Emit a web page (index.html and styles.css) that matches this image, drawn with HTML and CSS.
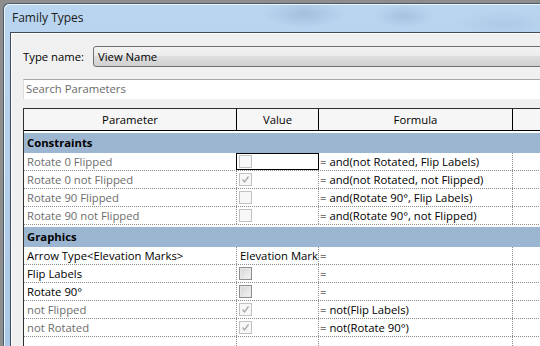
FILE: index.html
```html
<!DOCTYPE html>
<html lang="en">
<head>
  <meta charset="UTF-8" />
  <title>Family Types</title>
  <link rel="stylesheet" href="styles.css">
</head>
<body>
  <div class="window">
    <div class="titlebar">Family Types</div>
    <div class="frame">
      <div class="client">
        <div class="type-row">
          <span class="label">Type name:</span>
          <div class="combo">View Name</div>
        </div>
        <div class="search">Search Parameters</div>

        <div class="grid">
          <div class="row head">
            <div class="cell">Parameter</div>
            <div class="cell">Value</div>
            <div class="cell">Formula</div>
            <div class="cell"></div>
          </div>

          <div class="group">Constraints</div>
          <div class="row dim">
            <div class="cell">Rotate 0 Flipped</div>
            <div class="cell focus"><span class="box off"></span></div>
            <div class="cell formula">= and(not Rotated, Flip Labels)</div>
            <div class="cell"></div>
          </div>
          <div class="row dim">
            <div class="cell">Rotate 0 not Flipped</div>
            <div class="cell"><span class="box off"><svg viewBox="0 0 11 11"><path d="M2.5 5.5 L4.5 8 L8.5 2.5" /></svg></span></div>
            <div class="cell formula">= and(not Rotated, not Flipped)</div>
            <div class="cell"></div>
          </div>
          <div class="row dim">
            <div class="cell">Rotate 90 Flipped</div>
            <div class="cell"><span class="box off"></span></div>
            <div class="cell formula">= and(Rotate 90°, Flip Labels)</div>
            <div class="cell"></div>
          </div>
          <div class="row dim">
            <div class="cell">Rotate 90 not Flipped</div>
            <div class="cell"><span class="box off"></span></div>
            <div class="cell formula">= and(Rotate 90°, not Flipped)</div>
            <div class="cell"></div>
          </div>

          <div class="group">Graphics</div>
          <div class="row">
            <div class="cell">Arrow Type&lt;Elevation Marks&gt;</div>
            <div class="cell">Elevation Mark</div>
            <div class="cell formula">=</div>
            <div class="cell"></div>
          </div>
          <div class="row">
            <div class="cell">Flip Labels</div>
            <div class="cell"><span class="box"></span></div>
            <div class="cell formula">=</div>
            <div class="cell"></div>
          </div>
          <div class="row">
            <div class="cell">Rotate 90°</div>
            <div class="cell"><span class="box"></span></div>
            <div class="cell formula">=</div>
            <div class="cell"></div>
          </div>
          <div class="row dim">
            <div class="cell">not Flipped</div>
            <div class="cell"><span class="box off"><svg viewBox="0 0 11 11"><path d="M2.5 5.5 L4.5 8 L8.5 2.5" /></svg></span></div>
            <div class="cell formula">= not(Flip Labels)</div>
            <div class="cell"></div>
          </div>
          <div class="row dim">
            <div class="cell">not Rotated</div>
            <div class="cell"><span class="box off"><svg viewBox="0 0 11 11"><path d="M2.5 5.5 L4.5 8 L8.5 2.5" /></svg></span></div>
            <div class="cell formula">= not(Rotate 90°)</div>
            <div class="cell"></div>
          </div>
          <div class="row">
            <div class="cell"></div>
            <div class="cell"></div>
            <div class="cell"></div>
            <div class="cell"></div>
          </div>
        </div>
      </div>
    </div>
  </div>
</body>
</html>
```

FILE: styles.css
```css
* {
  box-sizing: border-box;
}
body {
  margin: 0;
  width: 540px;
  height: 346px;
  overflow: hidden;
  background: #8d8d8d;
  font-family: 'Open Sans', sans-serif;
  font-size: 11.3px;
  color: #000;
}
.window {
  margin: 3px 0 0 3px;
  height: 343px;
  display: flex;
  flex-direction: column;
  border-top: 1px solid #4b5b6c;
  border-left: 1px solid #4b5b6c;
  border-radius: 6px 0 0 0;
  background:
    radial-gradient(ellipse 40px 14px at 300px 10px, rgba(120,150,185,.35), transparent),
    radial-gradient(ellipse 30px 12px at 400px 12px, rgba(120,150,185,.3), transparent),
    radial-gradient(ellipse 50px 14px at 500px 20px, rgba(140,170,200,.25), transparent),
    linear-gradient(180deg, #bad5ef 0%, #aac9e8 100%);
  box-shadow: inset 1px 1px 0 rgba(255,255,255,.75);
}
.titlebar {
  height: 28px;
  line-height: 27px;
  padding-left: 8px;
  font-size: 12px;
  color: #1b1b1b;
}
.frame {
  flex: 1;
  display: flex;
  padding-left: 6px;
  min-height: 0;
}
.client {
  flex: 1;
  min-width: 0;
  overflow: hidden;
  background: #f0f0f0;
  border-top: 1px solid #3e4a58;
  border-left: 1px solid #3e4a58;
  box-shadow: inset 1px 1px 0 #fff;
  padding: 13px 0 0 12px;
}
.type-row {
  display: flex;
  align-items: center;
  height: 21px;
}
.label {
  width: 70px;
}
.combo {
  flex: 1;
  height: 21px;
  line-height: 19px;
  margin-right: -10px;
  padding-left: 4px;
  border: 1px solid #707070;
  border-radius: 3px;
  background: linear-gradient(180deg, #f3f3f3 0%, #ebebeb 45%, #dddddd 50%, #d0d0d0 100%);
}
.search {
  margin-top: 12px;
  margin-right: -10px;
  height: 20px;
  line-height: 18px;
  padding-left: 2px;
  background: #fff;
  border-top: 1px solid #a5a7ad;
  border-left: 1px solid #dcdde3;
  color: #6a6a6a;
}
.grid {
  margin-top: 9px;
  width: 540px;
  background: #fff;
  border-top: 1px solid #2e2e2e;
  border-left: 1px solid #2e2e2e;
}
.row {
  display: grid;
  grid-template-columns: 213px 82px 194px 1fr;
  height: 18px;
  border-bottom: 1px dotted #8a8a8a;
}
.cell {
  display: flex;
  align-items: center;
  padding-left: 3px;
  white-space: nowrap;
  overflow: hidden;
  border-right: 1px dotted #8a8a8a;
}
.cell.formula {
  padding-left: 1px;
  color: #000;
}
.row.dim .cell {
  color: #6d6d6d;
}
.row.dim .cell.formula {
  color: #000;
}
.head {
  height: 22px;
  background: #f6f6f6;
  border-bottom: 1px solid #000;
}
.head .cell {
  justify-content: center;
  padding-left: 0;
  border-right: 1px solid #000;
}
.group {
  margin-top: 2px;
  height: 20px;
  line-height: 20px;
  padding-left: 3px;
  background: #9cb6d2;
  font-weight: bold;
}
.cell.focus {
  overflow: visible;
  outline: 1px solid #000;
  outline-offset: -1px;
  border-left: 1px solid #000;
  margin-left: -1px;
}
.box {
  width: 13px;
  height: 13px;
  margin-left: -1px;
  border: 1px solid #8e8f8f;
  background: linear-gradient(135deg, #d4d4d4 0%, #f4f4f4 100%);
  box-shadow: inset 0 0 0 1px #e8e8e8;
}
.box.off {
  border-color: #c2c2c2;
  background: #f7f7f7;
  box-shadow: none;
}
.box svg {
  display: block;
  width: 11px;
  height: 11px;
}
.box path {
  fill: none;
  stroke: #a8a8a8;
  stroke-width: 1.3;
}
```
